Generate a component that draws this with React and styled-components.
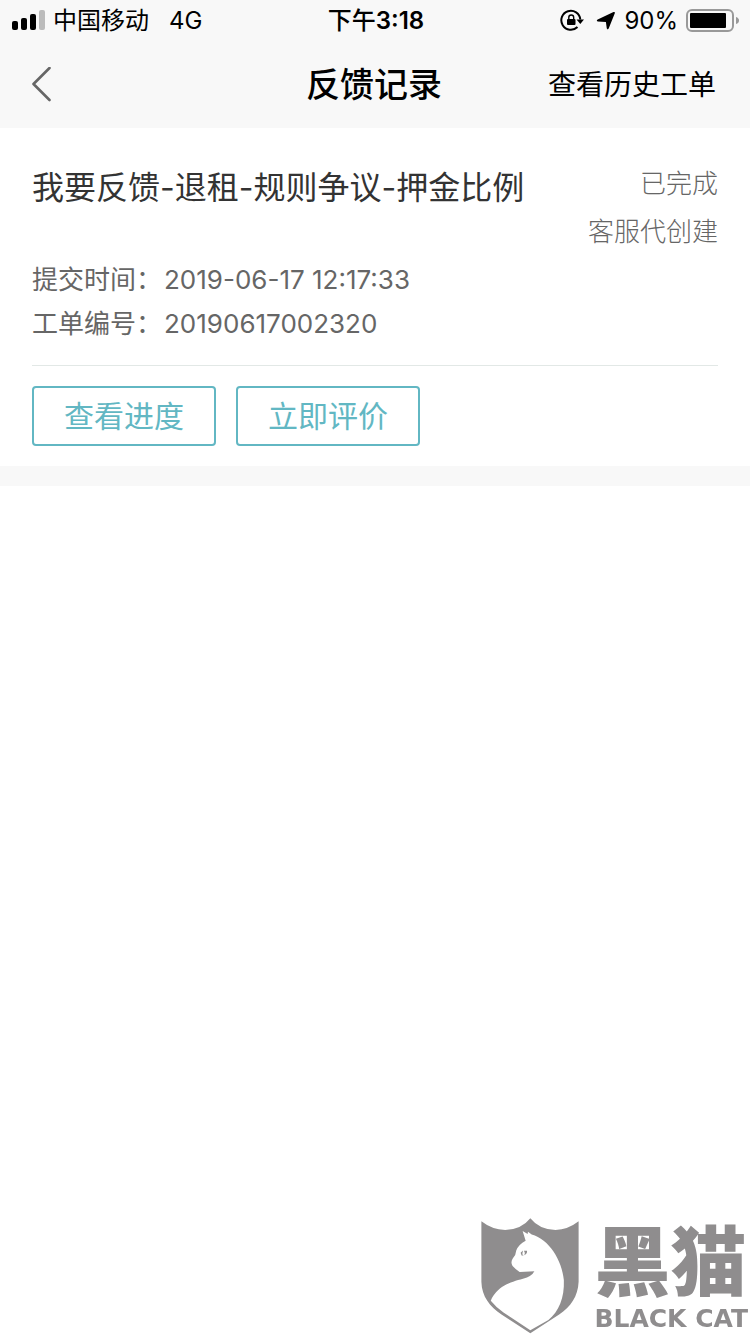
import React from 'react';
import styled, { createGlobalStyle } from 'styled-components';

const GlobalStyle = createGlobalStyle`
  * { box-sizing: border-box; }
  body {
    margin: 0;
    background: #fff;
    color: #000;
    font-family: Inter, "Noto Sans CJK SC", sans-serif;
  }
  h1, h2, dl, dd, p { margin: 0; }
`;

const Page = styled.div`
  display: flex;
  flex-direction: column;
  min-height: 100vh;
`;

const TopArea = styled.header`
  background: #f8f8f8;
`;

const Triple = styled.div`
  display: grid;
  grid-template-columns: 1fr auto 1fr;
  align-items: center;
`;

const StatusBar = styled(Triple)`
  height: 42px;
  padding: 0 10px 0 12px;
  font-size: 24px;
  line-height: 42px;
`;

const StatusGroup = styled.div`
  display: flex;
  align-items: center;
  justify-content: ${(p) => (p.$end ? 'flex-end' : 'flex-start')};
  gap: 8px;
`;

const StatusIcons = styled.span`
  display: flex;
  gap: 12px;
`;

const Network = styled.span`
  margin-left: 12px;
`;

const Clock = styled.time`
  font-weight: 600;
`;

const ClockPeriod = styled.span`
  font-weight: 500;
`;

const NavBar = styled(Triple)`
  height: 86px;
  padding: 0 34px 0 32px;
`;

const BackButton = styled.button`
  display: flex;
  justify-self: start;
  padding: 0;
  border: 0;
  background: none;
`;

const Title = styled.h1`
  font-size: 34px;
  line-height: 48px;
  font-weight: 500;
`;

const HistoryLink = styled.a`
  justify-self: end;
  color: #000;
  font-size: 28px;
  line-height: 40px;
  text-decoration: none;
`;

const Ticket = styled.article`
  padding: 32px 32px 20px;
  border-bottom: 20px solid #f8f8f8;
`;

const TicketHead = styled.div`
  display: flex;
  justify-content: space-between;
  gap: 16px;
`;

const TicketTitle = styled.h2`
  padding-top: 4px;
  color: #333;
  font-size: 32px;
  line-height: 48px;
  font-weight: 400;
`;

const TicketState = styled.div`
  flex: none;
  color: #666;
  font-size: 26px;
  line-height: 48px;
  font-weight: 300;
  text-align: right;
`;

const Details = styled.dl`
  padding: 2px 0 19px;
  border-bottom: 1px solid #e2e8e6;
  color: #666;
  font-size: 26px;
  line-height: 44px;
`;

const Detail = styled.div`
  display: flex;
  gap: 2px;
`;

const Actions = styled.div`
  display: flex;
  gap: 20px;
  padding-top: 20px;
`;

const ActionButton = styled.button`
  height: 60px;
  padding: 0 30px;
  border: 2px solid #62b7c3;
  border-radius: 4px;
  background: #fff;
  color: #62b7c3;
  font-family: inherit;
  font-size: 30px;
  line-height: 40px;
  font-weight: 400;
`;

const Watermark = styled.aside`
  position: fixed;
  right: 0;
  bottom: 0;
  display: flex;
  align-items: flex-end;
  gap: 15px;
  padding-right: 2px;
  color: #8f8d8e;
`;

const BrandText = styled.div`
  display: flex;
  flex-direction: column;
`;

const BrandName = styled.p`
  font-size: 76px;
  line-height: 84px;
  font-weight: 900;
`;

const BrandLatin = styled.p`
  font-family: "DejaVu Sans", sans-serif;
  font-size: 25px;
  line-height: 30px;
  font-weight: 700;
  white-space: nowrap;
`;

const SignalIcon = () => (
  <svg width="33" height="22" viewBox="0 0 33 22" aria-hidden="true">
    <rect x="0" y="11" width="6" height="9" rx="2" />
    <rect x="9" y="8" width="6" height="12" rx="2" />
    <rect x="18" y="4" width="6" height="16" rx="2" />
    <rect x="27" y="0" width="6" height="20" rx="2" fill="#bbb" />
  </svg>
);

const LockIcon = () => (
  <svg width="24" height="24" viewBox="0 0 24 24" aria-hidden="true">
    <path d="M17.500 18A9.500 9.500 0 1 1 20.300 10.500" fill="none" stroke="#000" strokeWidth="2" />
    <path d="M16.500 10.500h7.500l-3.700 4.500z" />
    <rect x="7" y="10" width="8.500" height="6" rx="1" />
    <path d="M8.800 10.500V8.400a2.450 2.450 0 0 1 4.900 0v2.100" fill="none" stroke="#000" strokeWidth="1.400" />
  </svg>
);

const LocationIcon = () => (
  <svg width="20" height="24" viewBox="0 0 20 24" aria-hidden="true">
    <path d="M18.800 4.200 12.700 19.600Q11.700 21.200 10.800 19.600L9.900 13 1.700 12.400Q-.1 11.400 1.700 10.400L17.500 3Q19.300 2.600 18.800 4.200Z" />
  </svg>
);

const BatteryIcon = () => (
  <svg width="54" height="24" viewBox="0 0 54 24" aria-hidden="true">
    <rect x="1" y="1" width="46" height="21" rx="5" fill="none" stroke="#999" strokeWidth="2" />
    <rect x="4" y="4" width="36" height="15" rx="1" />
    <path d="M50 8q3 1 3 3.500T50 15Z" fill="#999" />
  </svg>
);

const BackIcon = () => (
  <svg width="20" height="36" viewBox="0 0 20 36" aria-hidden="true">
    <path d="M17.500 1 1.500 17l16 16" fill="none" stroke="#666" strokeWidth="2.600" strokeLinecap="round" strokeLinejoin="round" />
  </svg>
);

const CatShield = () => (
  <svg width="98" height="116" viewBox="33 26 292 346" aria-hidden="true">
    <path
      fill="currentColor"
      d="M34 36Q66 61 105 62Q153 61 180 27Q207 61 255 62Q292 61 324 36V216C322 261 300 290 266 314L180 370L94 314C60 290 35 261 34 216Z"
    />
    <path
      fill="#fff"
      d="M157 65 172 74 173 67 184 75C235 88 275 152 280 211C282 265 265 305 234 330L180 361L100 308Q77 292 62 273C79 231 119 217 158 207Q184 201 192 185L148 187Q136 179 127 169Q120 158 128 146Q137 137 138 123Q145 105 166 94Z"
    />
    <path fill="currentColor" d="M151 130 158 123 156 134 160 138 154 138ZM161 124 170 124Q172 132 162 137Q166 131 161 124Z" />
  </svg>
);

export default function App() {
  return (
    <Page>
      <GlobalStyle />
      <TopArea>
        <StatusBar>
          <StatusGroup>
            <SignalIcon />
            <span>中国移动</span>
            <Network>4G</Network>
          </StatusGroup>
          <Clock>
            <ClockPeriod>下午</ClockPeriod>3:18
          </Clock>
          <StatusGroup $end>
            <StatusIcons>
              <LockIcon />
              <LocationIcon />
            </StatusIcons>
            <span>90%</span>
            <BatteryIcon />
          </StatusGroup>
        </StatusBar>
        <NavBar as="nav">
          <BackButton type="button" aria-label="返回">
            <BackIcon />
          </BackButton>
          <Title>反馈记录</Title>
          <HistoryLink href="#history">查看历史工单</HistoryLink>
        </NavBar>
      </TopArea>
      <main>
        <Ticket>
          <TicketHead>
            <TicketTitle>我要反馈-退租-规则争议-押金比例</TicketTitle>
            <TicketState>
              <p>已完成</p>
              <p>客服代创建</p>
            </TicketState>
          </TicketHead>
          <Details>
            <Detail>
              <dt>提交时间：</dt>
              <dd>2019-06-17 12:17:33</dd>
            </Detail>
            <Detail>
              <dt>工单编号：</dt>
              <dd>20190617002320</dd>
            </Detail>
          </Details>
          <Actions>
            <ActionButton type="button">查看进度</ActionButton>
            <ActionButton type="button">立即评价</ActionButton>
          </Actions>
        </Ticket>
      </main>
      <Watermark>
        <CatShield />
        <BrandText>
          <BrandName>黑猫</BrandName>
          <BrandLatin>BLACK CAT</BrandLatin>
        </BrandText>
      </Watermark>
    </Page>
  );
}
